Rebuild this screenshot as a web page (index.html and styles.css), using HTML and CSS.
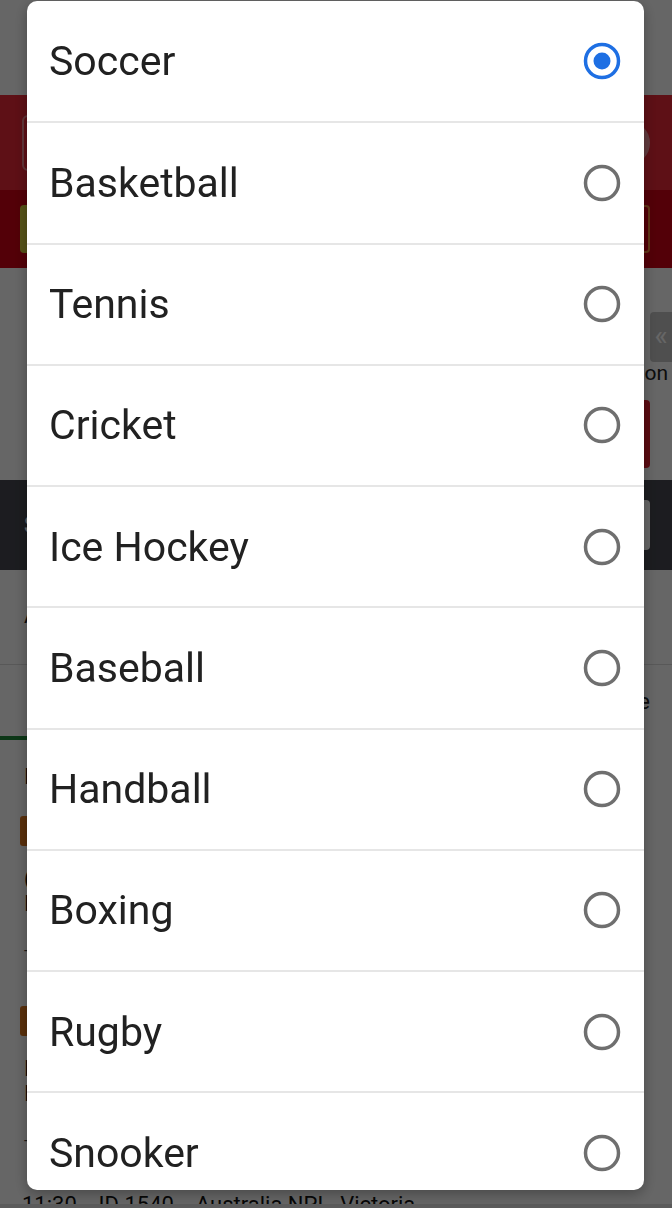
FILE: index.html
```html
<!DOCTYPE html>
<html lang="en">
  <head>
    <meta charset="UTF-8" />
    <meta name="viewport" content="width=device-width, initial-scale=1.0" />
    <title>Choose sport</title>
    <link rel="stylesheet" href="styles.css">
  </head>
  <body>
    <!-- page underneath the dialog -->
    <div class="page">
      <div class="status"></div>
      <div class="header">
        <div class="search"></div>
        <div class="avatar"></div>
      </div>
      <div class="subheader">
        <div class="chip chip-yellow"></div>
        <div class="chip chip-outline"></div>
      </div>
      <div class="content">
        <div class="side-tab">&laquo;</div>
        <div class="side-label">on</div>
        <div class="red-btn"></div>
      </div>
      <div class="darkbar">
        <span class="darkbar-title">S</span>
        <div class="darkbar-box"></div>
      </div>
      <div class="filter-row">A</div>
      <div class="more-row">e</div>
      <div class="tab-line"></div>
      <div class="league">I</div>
      <div class="match">
        <span class="team-icon"></span>
        <div class="team">(</div>
        <div class="team">I</div>
        <div class="score">-</div>
      </div>
      <div class="match">
        <span class="team-icon"></span>
        <div class="team">I</div>
        <div class="team">I</div>
        <div class="score">-</div>
      </div>
      <div class="fixture">11:30&nbsp;&nbsp;&nbsp;&nbsp;ID 1540&nbsp;&nbsp;&nbsp;&nbsp;Australia NPL&nbsp;&nbsp;Victoria</div>
      <div class="bottom-nav"></div>
    </div>

    <div class="scrim"></div>

    <div class="dialog">
      <ul class="options">
        <li class="option selected">
          <span>Soccer</span>
          <svg class="radio" viewBox="0 0 40 40"><circle cx="20" cy="20" r="16.5" /><circle class="dot" cx="20" cy="20" r="8.5" /></svg>
        </li>
        <li class="option">
          <span>Basketball</span>
          <svg class="radio" viewBox="0 0 40 40"><circle cx="20" cy="20" r="16.5" /></svg>
        </li>
        <li class="option">
          <span>Tennis</span>
          <svg class="radio" viewBox="0 0 40 40"><circle cx="20" cy="20" r="16.5" /></svg>
        </li>
        <li class="option">
          <span>Cricket</span>
          <svg class="radio" viewBox="0 0 40 40"><circle cx="20" cy="20" r="16.5" /></svg>
        </li>
        <li class="option">
          <span>Ice Hockey</span>
          <svg class="radio" viewBox="0 0 40 40"><circle cx="20" cy="20" r="16.5" /></svg>
        </li>
        <li class="option">
          <span>Baseball</span>
          <svg class="radio" viewBox="0 0 40 40"><circle cx="20" cy="20" r="16.5" /></svg>
        </li>
        <li class="option">
          <span>Handball</span>
          <svg class="radio" viewBox="0 0 40 40"><circle cx="20" cy="20" r="16.5" /></svg>
        </li>
        <li class="option">
          <span>Boxing</span>
          <svg class="radio" viewBox="0 0 40 40"><circle cx="20" cy="20" r="16.5" /></svg>
        </li>
        <li class="option">
          <span>Rugby</span>
          <svg class="radio" viewBox="0 0 40 40"><circle cx="20" cy="20" r="16.5" /></svg>
        </li>
        <li class="option">
          <span>Snooker</span>
          <svg class="radio" viewBox="0 0 40 40"><circle cx="20" cy="20" r="16.5" /></svg>
        </li>
      </ul>
    </div>
  </body>
</html>
```

FILE: styles.css
```css
* {
  box-sizing: border-box;
  margin: 0;
  padding: 0;
}

body {
  font-family: Roboto, "Liberation Sans", sans-serif;
  background-color: #fff;
  overflow: hidden;
}

.page {
  width: 672px;
  height: 1208px;
  overflow: hidden;
}

.status {
  height: 95px;
  background: #fff;
}

.header {
  height: 95px;
  background: #eb2837;
  display: flex;
  align-items: center;
  padding: 0 22px 0 22px;
  gap: 14px;
}

.search {
  flex: 1;
  height: 56px;
  border: 2px solid rgba(255, 255, 255, 0.45);
  border-radius: 6px;
}

.avatar {
  width: 44px;
  height: 44px;
  border-radius: 50%;
  background: rgba(255, 255, 255, 0.5);
}

.subheader {
  height: 78px;
  background: #cf0014;
  display: flex;
  align-items: center;
  justify-content: space-between;
  padding: 0 22px 0 20px;
}

.chip {
  height: 48px;
  border-radius: 4px;
}

.chip-yellow {
  width: 120px;
  background: #d8cf3e;
}

.chip-outline {
  width: 120px;
  border: 2px solid #f08a3c;
}

.content {
  height: 212px;
  background: #fff;
  display: flex;
  flex-direction: column;
  align-items: flex-end;
  padding-top: 44px;
}

.side-tab {
  width: 22px;
  height: 50px;
  background: #c6c6c6;
  border-radius: 4px 0 0 4px;
  color: #fff;
  font-size: 28px;
  line-height: 48px;
  text-align: center;
}

.side-label {
  margin-right: 4px;
  font-size: 21px;
  color: #222;
  line-height: 18px;
  margin-top: 2px;
}

.red-btn {
  width: 120px;
  height: 68px;
  margin-top: 18px;
  margin-right: 22px;
  background: #e31c2c;
  border-radius: 4px;
}

.darkbar {
  height: 90px;
  background: #464850;
  display: flex;
  align-items: center;
  justify-content: space-between;
  padding: 0 22px 0 24px;
}

.darkbar-title {
  color: #fff;
  font-size: 24px;
  font-weight: bold;
}

.darkbar-box {
  width: 90px;
  height: 50px;
  background: #fff;
  border-radius: 4px;
}

.filter-row {
  height: 95px;
  padding: 33px 24px 0;
  font-size: 22px;
  color: #222;
  border-bottom: 1px solid #ddd;
}

.more-row {
  height: 71px;
  padding-top: 24px;
  padding-right: 22px;
  text-align: right;
  font-size: 22px;
  color: #222;
}

.tab-line {
  width: 160px;
  height: 4px;
  background: #1f8a3a;
}

.league {
  height: 61px;
  padding: 24px 24px 0;
  font-size: 22px;
  line-height: 26px;
  color: #111;
}

.match {
  height: 190px;
  padding: 15px 24px 0;
  color: #111;
  font-size: 22px;
  line-height: 25px;
}

.team-icon {
  display: block;
  width: 28px;
  height: 30px;
  margin-left: -4px;
  margin-bottom: 20px;
  background: #e0781e;
  border-radius: 3px;
}

.team {
  height: 25px;
}

.score {
  margin-top: 22px;
  color: #444;
  font-size: 16px;
}

.fixture {
  height: 23px;
  padding: 11px 22px 0;
  font-size: 22px;
  line-height: 26px;
  color: #111;
  overflow: hidden;
  white-space: nowrap;
}

.bottom-nav {
  height: 60px;
  background: #e4e4e4;
}

/* dim layer and dialog sit over the page */
.scrim {
  position: fixed;
  inset: 0;
  background: rgba(0, 0, 0, 0.6);
}

.dialog {
  position: fixed;
  top: 1px;
  left: 27px;
  width: 617px;
  height: 1189px;
  background: #fff;
  border-radius: 10px;
  overflow: hidden;
  box-shadow: 0 4px 14px rgba(0, 0, 0, 0.3);
}

.options {
  list-style: none;
}

.option {
  height: 121.25px;
  display: flex;
  align-items: center;
  justify-content: space-between;
  padding: 0 22px 0 22px;
  border-top: 2px solid #e6e6e6;
  font-size: 41px;
  color: #212121;
}

.option:first-child {
  border-top: none;
  height: 120.25px;
}

.radio {
  width: 40px;
  height: 40px;
  fill: none;
  stroke: #6f6f6f;
  stroke-width: 3.5;
}

.selected .radio {
  stroke: #1e6fe3;
}

.radio .dot {
  fill: #1e6fe3;
  stroke: none;
}
```
